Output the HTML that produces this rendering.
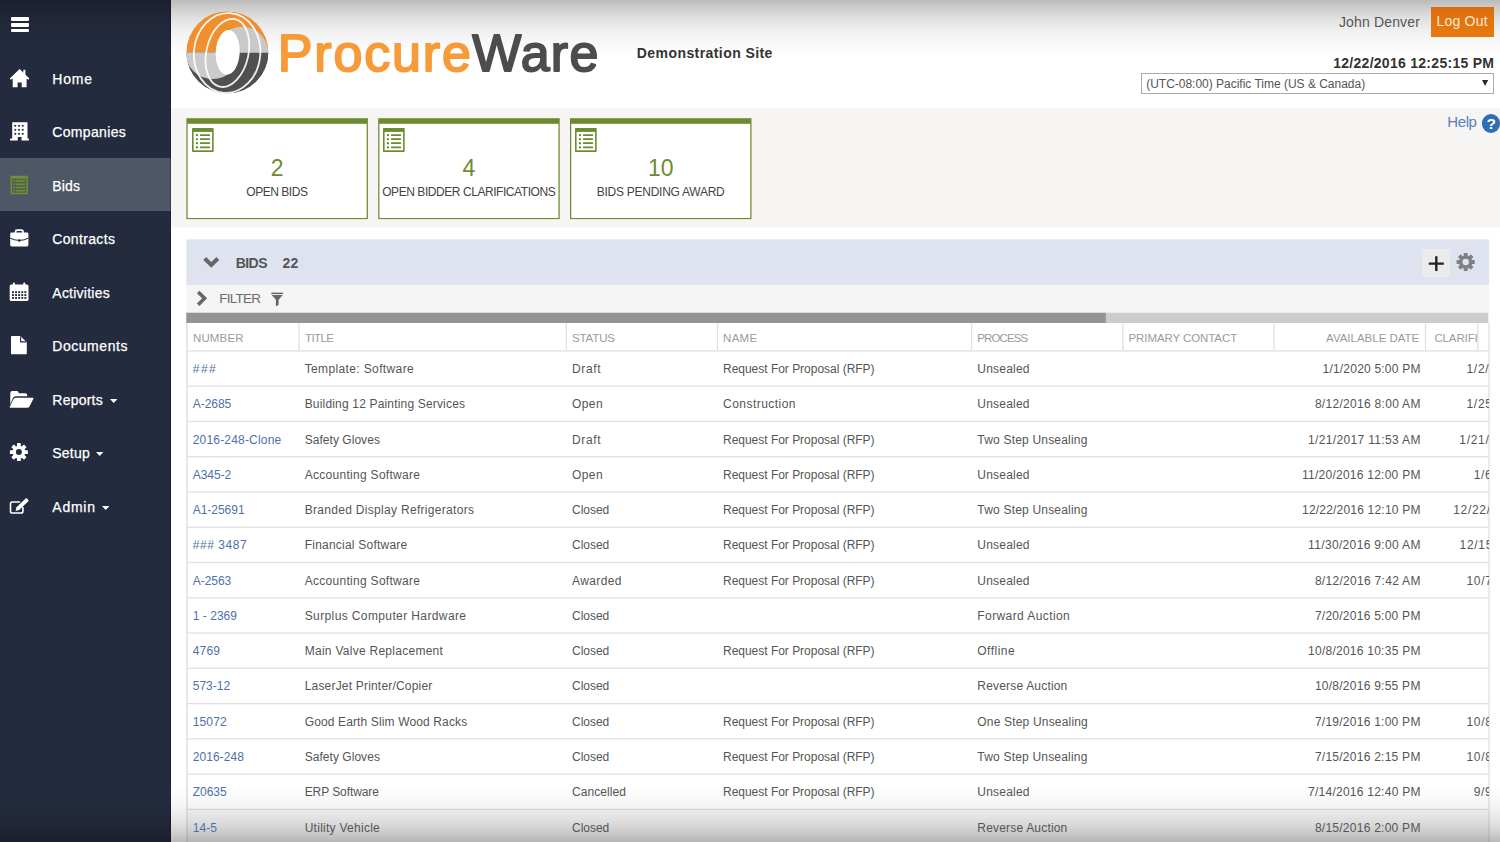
<!DOCTYPE html>
<html><head><meta charset="utf-8"><title>ProcureWare</title>
<style>
*{box-sizing:border-box;margin:0;padding:0}
html,body{width:1500px;height:842px;overflow:hidden;background:#fff;font-family:"Liberation Sans",sans-serif;}
#root{position:relative;width:1500px;height:842px;overflow:hidden;background:#fff}
.abs{position:absolute}
#side{position:absolute;left:0;top:0;width:171px;height:842px;background:#242b3e}
#shT{position:absolute;left:0;top:0;width:1500px;height:60px;pointer-events:none;background:linear-gradient(to bottom,rgba(0,0,0,.268) 0,rgba(0,0,0,.18) 10px,rgba(0,0,0,.11) 20px,rgba(0,0,0,.063) 30px,rgba(0,0,0,.03) 40px,rgba(0,0,0,.012) 50px,rgba(0,0,0,0) 60px)}
#shB{position:absolute;left:0;top:782px;width:1500px;height:60px;pointer-events:none;background:linear-gradient(to top,rgba(0,0,0,.268) 0,rgba(0,0,0,.18) 10px,rgba(0,0,0,.11) 20px,rgba(0,0,0,.063) 30px,rgba(0,0,0,.03) 40px,rgba(0,0,0,.012) 50px,rgba(0,0,0,0) 60px)}
svg{position:absolute;overflow:visible}
</style></head><body><div id="root">

<svg style="left:0;top:0" width="1500" height="842" viewBox="0 0 1500 842"><rect x="171" y="108.3" width="1329" height="119.2" fill="#f6f5f3"/></svg>
<div id="side"></div>
<div class="abs" style="left:0;top:158px;width:171px;height:53px;background:#4d5765"></div>
<div id="shT"></div>
<div class="abs" style="left:10.5px;top:17.3px;width:18px;height:3.6px;background:#fff;border-radius:1px"></div>
<div class="abs" style="left:10.5px;top:23px;width:18px;height:3.6px;background:#fff;border-radius:1px"></div>
<div class="abs" style="left:10.5px;top:28.7px;width:18px;height:3.6px;background:#fff;border-radius:1px"></div>
<div style="position:absolute;top:68.90px;line-height:20px;font-size:14px;color:#fff;white-space:pre;letter-spacing:0.814px;left:52.30px;-webkit-text-stroke:0.25px #fff;">Home</div>
<div style="position:absolute;top:122.40px;line-height:20px;font-size:14px;color:#fff;white-space:pre;letter-spacing:0.334px;left:52.30px;-webkit-text-stroke:0.25px #fff;">Companies</div>
<div style="position:absolute;top:175.70px;line-height:20px;font-size:14px;color:#fff;white-space:pre;letter-spacing:0.122px;left:52.30px;-webkit-text-stroke:0.25px #fff;">Bids</div>
<div style="position:absolute;top:229.30px;line-height:20px;font-size:14px;color:#fff;white-space:pre;letter-spacing:0.335px;left:52.30px;-webkit-text-stroke:0.25px #fff;">Contracts</div>
<div style="position:absolute;top:282.90px;line-height:20px;font-size:14px;color:#fff;white-space:pre;letter-spacing:0.241px;left:52.30px;-webkit-text-stroke:0.25px #fff;">Activities</div>
<div style="position:absolute;top:335.90px;line-height:20px;font-size:14px;color:#fff;white-space:pre;letter-spacing:0.536px;left:52.30px;-webkit-text-stroke:0.25px #fff;">Documents</div>
<div style="position:absolute;top:389.90px;line-height:20px;font-size:14px;color:#fff;white-space:pre;letter-spacing:0.228px;left:52.30px;-webkit-text-stroke:0.25px #fff;">Reports</div>
<div style="position:absolute;top:443.40px;line-height:20px;font-size:14px;color:#fff;white-space:pre;letter-spacing:0.227px;left:52.30px;-webkit-text-stroke:0.25px #fff;">Setup</div>
<div style="position:absolute;top:496.90px;line-height:20px;font-size:14px;color:#fff;white-space:pre;letter-spacing:0.753px;left:52.30px;-webkit-text-stroke:0.25px #fff;">Admin</div>
<svg style="left:109.7px;top:398.5px" width="7.4" height="4"><path d="M0 0H7.4L3.7 4Z" fill="#fff"/></svg>
<svg style="left:96.2px;top:452px" width="7.4" height="4"><path d="M0 0H7.4L3.7 4Z" fill="#fff"/></svg>
<svg style="left:101.7px;top:505.5px" width="7.4" height="4"><path d="M0 0H7.4L3.7 4Z" fill="#fff"/></svg>
<svg style="left:0;top:0" width="171" height="842" viewBox="0 0 171 842">
<!-- home -->
<g fill="#fff">
<path d="M19.6 68.9L29.4 78.5L28.4 79.7L26.6 78.4V87.2H21.7V82.4H17.6V87.2H12.7V78.4L10.8 79.7L9.8 78.5Z"/>
<rect x="23.3" y="69.8" width="2.1" height="5"/>
</g>
<!-- building -->
<g fill="#fff">
<path d="M12.2 122.2H27.5V138.6H28.9V140.5H21.5V137H17.8V140.5H10.1V138.6H12.2Z"/>
</g>
<g fill="#242b3e">
<rect x="14.4" y="124.9" width="1.8" height="1.8"/><rect x="18.1" y="124.9" width="1.8" height="1.8"/><rect x="21.8" y="124.9" width="1.8" height="1.8"/>
<rect x="14.4" y="128.9" width="1.8" height="1.8"/><rect x="18.1" y="128.9" width="1.8" height="1.8"/><rect x="21.8" y="128.9" width="1.8" height="1.8"/>
<rect x="14.4" y="132.9" width="1.8" height="1.8"/><rect x="18.1" y="132.9" width="1.8" height="1.8"/><rect x="21.8" y="132.9" width="1.8" height="1.8"/>
<rect x="23.9" y="124.9" width="1.4" height="1.8" opacity="0"/>
</g>
<!-- bids (green list) -->
<g>
<rect x="10.5" y="175.7" width="17.4" height="18.5" fill="#6f9037"/>
<rect x="12" y="178.6" width="14.4" height="14.2" fill="#55614f"/>
<g fill="#6f9037">
<rect x="13.3" y="180.3" width="1.6" height="1.5"/><rect x="15.9" y="180.3" width="9.2" height="1.5"/>
<rect x="13.3" y="183.5" width="1.6" height="1.5"/><rect x="15.9" y="183.5" width="9.2" height="1.5"/>
<rect x="13.3" y="186.7" width="1.6" height="1.5"/><rect x="15.9" y="186.7" width="9.2" height="1.5"/>
<rect x="13.3" y="189.9" width="1.6" height="1.5"/><rect x="15.9" y="189.9" width="9.2" height="1.5"/>
</g>
</g>
<!-- briefcase -->
<g>
<path d="M15.6 233V231.8Q15.6 230.2 17.4 230.2H21.2Q23 230.2 23 231.8V233" fill="none" stroke="#fff" stroke-width="1.7"/>
<path d="M11.6 232.6H27Q28.4 232.6 28.4 234V245Q28.4 246.4 27 246.4H11.6Q10.2 246.4 10.2 245V234Q10.2 232.6 11.6 232.6Z" fill="#fff"/>
<path d="M10.2 238.2Q14.6 240.4 19.3 240.4Q24 240.4 28.4 238.2" fill="none" stroke="#242b3e" stroke-width="1"/>
<circle cx="19.3" cy="240.5" r="1.3" fill="#242b3e"/>
</g>
<!-- calendar -->
<g>
<path d="M11.2 284.6H27Q28.5 284.6 28.5 286.1V299.6Q28.5 301.1 27 301.1H11.2Q9.7 301.1 9.7 299.6V286.1Q9.7 284.6 11.2 284.6Z" fill="#fff"/>
<rect x="12.9" y="282.5" width="2" height="4" rx="1" fill="#fff"/><rect x="23.3" y="282.5" width="2" height="4" rx="1" fill="#fff"/>
<g fill="#242b3e">
<rect x="12" y="291.2" width="1.9" height="1.9"/><rect x="15.1" y="291.2" width="1.9" height="1.9"/><rect x="18.2" y="291.2" width="1.9" height="1.9"/><rect x="21.3" y="291.2" width="1.9" height="1.9"/><rect x="24.4" y="291.2" width="1.9" height="1.9"/>
<rect x="12" y="294.1" width="1.9" height="1.9"/><rect x="15.1" y="294.1" width="1.9" height="1.9"/><rect x="18.2" y="294.1" width="1.9" height="1.9"/><rect x="21.3" y="294.1" width="1.9" height="1.9"/><rect x="24.4" y="294.1" width="1.9" height="1.9"/>
<rect x="12" y="297" width="1.9" height="1.9"/><rect x="15.1" y="297" width="1.9" height="1.9"/><rect x="18.2" y="297" width="1.9" height="1.9"/><rect x="21.3" y="297" width="1.9" height="1.9"/><rect x="24.4" y="297" width="1.9" height="1.9"/>
</g>
</g>
<!-- file -->
<g>
<path d="M11.8 336.1H20.3L26.8 342.2V353.5Q26.8 354.3 26 354.3H11.8Q11 354.3 11 353.5V336.9Q11 336.1 11.8 336.1Z" fill="#fff"/>
<path d="M20.6 336.6V341.9H26.4" fill="none" stroke="#242b3e" stroke-width="1.1"/>
</g>
<!-- folder open -->
<g fill="#fff">
<path d="M10.3 404.5V393Q10.3 391 12.3 391H16.8Q18.6 391 18.6 392.8V393.3H25.2Q27.2 393.3 27.2 395.3V396.3H15.8Q13.8 396.3 12.9 398.1Z"/>
<path d="M15.4 397.7H32.6Q34 397.7 33.3 399L29.6 406.3Q28.8 407.8 27.1 407.8H10.6Q9.2 407.8 9.9 406.5L13.4 399.2Q14.1 397.7 15.4 397.7Z"/>
</g>
<!-- cog -->
<g transform="translate(18.9 452.1)">
<g fill="#fff">
<circle r="6.4"/>
<rect x="-1.9" y="-9" width="3.8" height="18" rx="0.6"/>
<rect x="-1.9" y="-9" width="3.8" height="18" rx="0.6" transform="rotate(45)"/>
<rect x="-1.9" y="-9" width="3.8" height="18" rx="0.6" transform="rotate(90)"/>
<rect x="-1.9" y="-9" width="3.8" height="18" rx="0.6" transform="rotate(135)"/>
</g>
<circle r="3" fill="#242b3e"/>
</g>
<!-- edit -->
<g>
<path d="M22.9 507.6V511.2Q22.9 513 21.1 513H12.3Q10.5 513 10.5 511.2V503.8Q10.5 502 12.3 502H19.5" fill="none" stroke="#fff" stroke-width="1.6" stroke-linecap="round"/>
<path d="M15.6 510.9L16.5 507.3L25.6 498.6Q26.3 498 27 498.6L28.3 499.9Q28.9 500.6 28.3 501.3L19.2 510Z" fill="#fff"/>
</g>
</svg>

<svg style="left:171px;top:0" width="460" height="108" viewBox="171 0 460 108">
<defs>
<clipPath id="cTop"><rect x="180" y="5" width="95" height="47.6"/></clipPath>
<clipPath id="cBot"><rect x="180" y="52.6" width="95" height="48"/></clipPath>
<clipPath id="cOut"><circle cx="227.4" cy="52.4" r="41.2"/></clipPath>
<clipPath id="cTR"><rect x="228" y="5" width="50" height="47.6"/></clipPath>
<clipPath id="cBL"><rect x="180" y="52.6" width="47" height="48"/></clipPath>
</defs>
<g clip-path="url(#cOut)">
<g clip-path="url(#cTop)"><circle cx="227.4" cy="52.4" r="41.2" fill="#ef9030"/></g>
<g clip-path="url(#cBot)"><circle cx="227.4" cy="52.4" r="41.2" fill="#505050"/></g>
<g clip-path="url(#cTR)"><circle cx="242" cy="53" r="26.3" fill="#c9c9c9"/></g>
<g clip-path="url(#cBL)"><circle cx="212.7" cy="51.5" r="27.5" fill="#cbcbcb"/></g>
<g fill="none" stroke="#fff" stroke-width="1.8" stroke-opacity="0.9">
<ellipse cx="227.4" cy="52.9" rx="21" ry="34.6" transform="rotate(13 227.4 52.9)"/>
<ellipse cx="227.1" cy="53" rx="33.2" ry="40" transform="rotate(5 227.1 53)"/>
</g>
<ellipse cx="227.7" cy="52.4" rx="12" ry="22.4" fill="#fff" transform="rotate(3 227.7 52.4)"/>
</g>
<text x="277.8" y="71" font-family="Liberation Sans, sans-serif" font-size="52" font-weight="400" fill="#f79a38" stroke="#f79a38" stroke-width="1.9" stroke-linejoin="round" textLength="193" lengthAdjust="spacing">Procure</text>
<text x="472.3" y="71" font-family="Liberation Sans, sans-serif" font-size="52" font-weight="400" fill="#4d4d4d" stroke="#4d4d4d" stroke-width="1.9" stroke-linejoin="round" textLength="126" lengthAdjust="spacing">Ware</text>
</svg>

<div style="position:absolute;top:42.50px;line-height:20px;font-size:14px;color:#333;white-space:pre;font-weight:700;letter-spacing:0.426px;left:636.80px;">Demonstration Site</div>
<div style="position:absolute;top:12.20px;line-height:20px;font-size:14px;color:#555;white-space:pre;letter-spacing:0.161px;left:1338.90px;">John Denver</div>
<div class="abs" style="left:1431px;top:7px;width:63px;height:30px;background:linear-gradient(#d96c0e,#e3750f 50%,#e6780f)"></div>
<div style="position:absolute;top:11.20px;line-height:20px;font-size:14px;color:#f8e8d6;white-space:pre;letter-spacing:0.245px;left:1436.40px;">Log Out</div>
<div style="position:absolute;top:52.70px;line-height:20px;font-size:14px;color:#333;white-space:pre;font-weight:700;letter-spacing:0.281px;left:1333.20px;">12/22/2016 12:25:15 PM</div>
<div class="abs" style="left:1141px;top:73px;width:353px;height:21px;background:#fff;border:1px solid #ababab"></div>
<div style="position:absolute;top:73.50px;line-height:20px;font-size:12px;color:#555;white-space:pre;letter-spacing:-0.011px;left:1146.20px;">(UTC-08:00) Pacific Time (US &amp; Canada)</div>
<svg style="left:1481.7px;top:79.8px" width="6.2" height="6.1"><path d="M0 0H6.2L3.1 6.1Z" fill="#2a2a2a"/></svg>
<div style="position:absolute;top:111.80px;line-height:20px;font-size:15px;color:#5580ba;white-space:pre;letter-spacing:-0.42px;left:1447.30px;">Help</div>
<div class="abs" style="left:1481.5px;top:114px;width:18.6px;height:18.6px;border-radius:50%;background:#2f6db5"></div>
<div style="position:absolute;top:113.70px;line-height:20px;font-size:15.5px;color:#fff;white-space:pre;font-weight:700;left:1486.40px;">?</div>
<svg style="left:0;top:0" width="1500" height="842" viewBox="0 0 1500 842"><rect x="186.4" y="118.2" width="181.5" height="100.9" fill="#6b8b30"/><rect x="187.65" y="123.8" width="179" height="94.2" fill="#fff"/><rect x="378.2" y="118.2" width="181.5" height="100.9" fill="#6b8b30"/><rect x="379.45" y="123.8" width="179" height="94.2" fill="#fff"/><rect x="570" y="118.2" width="181.5" height="100.9" fill="#6b8b30"/><rect x="571.25" y="123.8" width="179" height="94.2" fill="#fff"/></svg>
<div style="position:absolute;top:157.50px;line-height:20px;font-size:23px;color:#6c8c32;white-space:pre;left:270.75px;">2</div>
<div style="position:absolute;top:181.60px;line-height:20px;font-size:12px;color:#444;white-space:pre;letter-spacing:-0.47px;left:246.35px;">OPEN BIDS</div>
<div style="position:absolute;top:157.50px;line-height:20px;font-size:23px;color:#6c8c32;white-space:pre;left:462.55px;">4</div>
<div style="position:absolute;top:181.60px;line-height:20px;font-size:12px;color:#444;white-space:pre;letter-spacing:-0.439px;left:382.20px;">OPEN BIDDER CLARIFICATIONS</div>
<div style="position:absolute;top:157.50px;line-height:20px;font-size:23px;color:#6c8c32;white-space:pre;left:647.95px;">10</div>
<div style="position:absolute;top:181.60px;line-height:20px;font-size:12px;color:#444;white-space:pre;letter-spacing:-0.257px;left:596.70px;">BIDS PENDING AWARD</div>
<svg style="left:191.5px;top:128.3px" width="21.7" height="24" viewBox="0 0 21.7 24"><rect x="0" y="0" width="21.7" height="24" rx="0.8" fill="#6b8b30"/><rect x="1.6" y="3.9" width="18.5" height="18.4" fill="#fff"/><rect x="3.9" y="6.1" width="2.1" height="2" fill="#6b8b30"/><rect x="7.9" y="6.2" width="10.2" height="1.8" rx="0.5" fill="#6b8b30"/><rect x="3.9" y="10.2" width="2.1" height="2" fill="#6b8b30"/><rect x="7.9" y="10.3" width="10.2" height="1.8" rx="0.5" fill="#6b8b30"/><rect x="3.9" y="14.2" width="2.1" height="2" fill="#6b8b30"/><rect x="7.9" y="14.3" width="10.2" height="1.8" rx="0.5" fill="#6b8b30"/><rect x="3.9" y="18.3" width="2.1" height="2" fill="#6b8b30"/><rect x="7.9" y="18.4" width="10.2" height="1.8" rx="0.5" fill="#6b8b30"/></svg>
<svg style="left:383.3px;top:128.3px" width="21.7" height="24" viewBox="0 0 21.7 24"><rect x="0" y="0" width="21.7" height="24" rx="0.8" fill="#6b8b30"/><rect x="1.6" y="3.9" width="18.5" height="18.4" fill="#fff"/><rect x="3.9" y="6.1" width="2.1" height="2" fill="#6b8b30"/><rect x="7.9" y="6.2" width="10.2" height="1.8" rx="0.5" fill="#6b8b30"/><rect x="3.9" y="10.2" width="2.1" height="2" fill="#6b8b30"/><rect x="7.9" y="10.3" width="10.2" height="1.8" rx="0.5" fill="#6b8b30"/><rect x="3.9" y="14.2" width="2.1" height="2" fill="#6b8b30"/><rect x="7.9" y="14.3" width="10.2" height="1.8" rx="0.5" fill="#6b8b30"/><rect x="3.9" y="18.3" width="2.1" height="2" fill="#6b8b30"/><rect x="7.9" y="18.4" width="10.2" height="1.8" rx="0.5" fill="#6b8b30"/></svg>
<svg style="left:575.1px;top:128.3px" width="21.7" height="24" viewBox="0 0 21.7 24"><rect x="0" y="0" width="21.7" height="24" rx="0.8" fill="#6b8b30"/><rect x="1.6" y="3.9" width="18.5" height="18.4" fill="#fff"/><rect x="3.9" y="6.1" width="2.1" height="2" fill="#6b8b30"/><rect x="7.9" y="6.2" width="10.2" height="1.8" rx="0.5" fill="#6b8b30"/><rect x="3.9" y="10.2" width="2.1" height="2" fill="#6b8b30"/><rect x="7.9" y="10.3" width="10.2" height="1.8" rx="0.5" fill="#6b8b30"/><rect x="3.9" y="14.2" width="2.1" height="2" fill="#6b8b30"/><rect x="7.9" y="14.3" width="10.2" height="1.8" rx="0.5" fill="#6b8b30"/><rect x="3.9" y="18.3" width="2.1" height="2" fill="#6b8b30"/><rect x="7.9" y="18.4" width="10.2" height="1.8" rx="0.5" fill="#6b8b30"/></svg>
<svg style="left:0;top:0" width="1500" height="842" viewBox="0 0 1500 842"><rect x="186.4" y="239.4" width="1302.8" height="46" fill="#dfe3ef"/><rect x="186.4" y="285.3" width="1302.8" height="28" fill="#f5f5f5"/><path d="M186.4 312.8H1486.6Q1488.4 312.8 1488.4 314.6V323H186.4Z" fill="#ccc"/><rect x="186.4" y="312.8" width="919.4" height="10.2" fill="#949494"/></svg>
<div style="position:absolute;top:252.60px;line-height:20px;font-size:14px;color:#555;white-space:pre;font-weight:700;letter-spacing:-0.551px;left:235.70px;">BIDS</div>
<div style="position:absolute;top:252.60px;line-height:20px;font-size:14px;color:#555;white-space:pre;font-weight:700;letter-spacing:0.222px;left:282.40px;">22</div>
<div style="position:absolute;top:289.00px;line-height:20px;font-size:13.5px;color:#6a6a6a;white-space:pre;letter-spacing:-0.783px;left:219.30px;">FILTER</div>
<div class="abs" style="left:1422px;top:249px;width:27.9px;height:27.9px;background:#ebebeb"></div>
<svg style="left:186.5px;top:239.5px" width="1302" height="75" viewBox="186.5 239.5 1302 75">
<path d="M204.2 258L210.75 264.5L217.3 258" fill="none" stroke="#666" stroke-width="4" stroke-linecap="butt" stroke-linejoin="miter"/>
<path d="M197.7 291.4L204.1 297.8L197.7 304.2" fill="none" stroke="#666" stroke-width="3.6" stroke-linecap="butt" stroke-linejoin="miter"/>
<rect x="270.8" y="292.1" width="11.8" height="1.5" fill="#666"/>
<path d="M271.2 294.5H282.2L278.1 299.3V304.5L275.4 305.8V299.3Z" fill="#666"/>
<path d="M1435.8 255.7V270.6M1428.3 263.15H1443.3" stroke="#222" stroke-width="2.4" fill="none"/>
<g transform="translate(1465.2 261.5)"><g fill="#808080"><circle r="6.6"/>
<rect x="-2" y="-9.1" width="4" height="18.2" rx="0.7" transform="rotate(0)"/>
<rect x="-2" y="-9.1" width="4" height="18.2" rx="0.7" transform="rotate(45)"/>
<rect x="-2" y="-9.1" width="4" height="18.2" rx="0.7" transform="rotate(90)"/>
<rect x="-2" y="-9.1" width="4" height="18.2" rx="0.7" transform="rotate(135)"/>
</g><circle r="3.2" fill="#dfe3ef"/></g>
</svg>
<div class="abs" style="left:187.5px;top:809.41px;width:1300px;height:40px;background:#f8f8f8"></div>
<svg style="left:0;top:0" width="1500" height="842" viewBox="0 0 1500 842"><rect x="187" y="350.25" width="1301.5" height="1.3" fill="#e0e0e0"/><rect x="187" y="385.52" width="1301.5" height="1.3" fill="#e0e0e0"/><rect x="187" y="420.79" width="1301.5" height="1.3" fill="#e0e0e0"/><rect x="187" y="456.06" width="1301.5" height="1.3" fill="#e0e0e0"/><rect x="187" y="491.33" width="1301.5" height="1.3" fill="#e0e0e0"/><rect x="187" y="526.60" width="1301.5" height="1.3" fill="#e0e0e0"/><rect x="187" y="561.87" width="1301.5" height="1.3" fill="#e0e0e0"/><rect x="187" y="597.14" width="1301.5" height="1.3" fill="#e0e0e0"/><rect x="187" y="632.41" width="1301.5" height="1.3" fill="#e0e0e0"/><rect x="187" y="667.68" width="1301.5" height="1.3" fill="#e0e0e0"/><rect x="187" y="702.95" width="1301.5" height="1.3" fill="#e0e0e0"/><rect x="187" y="738.22" width="1301.5" height="1.3" fill="#e0e0e0"/><rect x="187" y="773.49" width="1301.5" height="1.3" fill="#e0e0e0"/><rect x="187" y="808.76" width="1301.5" height="1.3" fill="#e0e0e0"/><rect x="298.30" y="323.3" width="1.3" height="27.3" fill="#e0e0e0"/><rect x="565.65" y="323.3" width="1.3" height="27.3" fill="#e0e0e0"/><rect x="716.85" y="323.3" width="1.3" height="27.3" fill="#e0e0e0"/><rect x="970.95" y="323.3" width="1.3" height="27.3" fill="#e0e0e0"/><rect x="1122.15" y="323.3" width="1.3" height="27.3" fill="#e0e0e0"/><rect x="1273.35" y="323.3" width="1.3" height="27.3" fill="#e0e0e0"/><rect x="1424.85" y="323.3" width="1.3" height="27.3" fill="#e0e0e0"/><rect x="1477.15" y="323.3" width="1.3" height="27.3" fill="#e0e0e0"/><rect x="186.1" y="323" width="1.7" height="519" fill="#e4e4e4"/><rect x="1488.2" y="323" width="1.7" height="519" fill="#e6e6e6"/><rect x="170" y="0" width="1" height="842" fill="#000" fill-opacity="0.22"/></svg>
<div id="shB"></div>
<div style="position:absolute;top:327.70px;line-height:20px;font-size:11.5px;color:#9b9b9b;white-space:pre;letter-spacing:0.131px;left:193.00px;">NUMBER</div>
<div style="position:absolute;top:327.70px;line-height:20px;font-size:11.5px;color:#9b9b9b;white-space:pre;letter-spacing:-0.578px;left:305.00px;">TITLE</div>
<div style="position:absolute;top:327.70px;line-height:20px;font-size:11.5px;color:#9b9b9b;white-space:pre;letter-spacing:-0.134px;left:572.00px;">STATUS</div>
<div style="position:absolute;top:327.70px;line-height:20px;font-size:11.5px;color:#9b9b9b;white-space:pre;letter-spacing:0.322px;left:723.00px;">NAME</div>
<div style="position:absolute;top:327.70px;line-height:20px;font-size:11.5px;color:#9b9b9b;white-space:pre;letter-spacing:-0.875px;left:977.30px;">PROCESS</div>
<div style="position:absolute;top:327.70px;line-height:20px;font-size:11.5px;color:#9b9b9b;white-space:pre;letter-spacing:-0.086px;left:1128.50px;">PRIMARY CONTACT</div>
<div style="position:absolute;top:327.70px;line-height:20px;font-size:11.5px;color:#9b9b9b;white-space:pre;letter-spacing:-0.01px;left:1326.10px;">AVAILABLE DATE</div>
<div class="abs" style="left:1426px;top:324px;width:51px;height:26px;overflow:hidden"><div style="position:absolute;top:3.70px;line-height:20px;font-size:11.5px;color:#9b9b9b;white-space:pre;letter-spacing:-0.125px;left:8.40px;">CLARIFICATION</div></div>
<div class="abs" style="left:0;top:0;width:1488.5px;height:842px;overflow:hidden">
<div style="position:absolute;top:359.03px;line-height:20px;font-size:12px;color:#4d72a8;white-space:pre;letter-spacing:1.534px;left:192.70px;">###</div>
<div style="position:absolute;top:359.03px;line-height:20px;font-size:12px;color:#555;white-space:pre;letter-spacing:0.369px;left:304.70px;">Template: Software</div>
<div style="position:absolute;top:359.03px;line-height:20px;font-size:12px;color:#555;white-space:pre;letter-spacing:0.646px;left:572.00px;">Draft</div>
<div style="position:absolute;top:359.03px;line-height:20px;font-size:12px;color:#555;white-space:pre;letter-spacing:-0.019px;left:723.00px;">Request For Proposal (RFP)</div>
<div style="position:absolute;top:359.03px;line-height:20px;font-size:12px;color:#555;white-space:pre;letter-spacing:0.214px;left:977.30px;">Unsealed</div>
<div style="position:absolute;top:359.03px;line-height:20px;font-size:12px;color:#555;white-space:pre;letter-spacing:0.211px;left:1322.50px;">1/1/2020 5:00 PM</div>
<div style="position:absolute;top:359.03px;line-height:20px;font-size:12px;color:#555;white-space:pre;letter-spacing:0.695px;left:1466.50px;">1/2/2020 5:00 PM</div>
<div style="position:absolute;top:394.30px;line-height:20px;font-size:12px;color:#4d72a8;white-space:pre;letter-spacing:-0.021px;left:192.70px;">A-2685</div>
<div style="position:absolute;top:394.30px;line-height:20px;font-size:12px;color:#555;white-space:pre;letter-spacing:0.174px;left:304.70px;">Building 12 Painting Services</div>
<div style="position:absolute;top:394.30px;line-height:20px;font-size:12px;color:#555;white-space:pre;letter-spacing:0.414px;left:572.00px;">Open</div>
<div style="position:absolute;top:394.30px;line-height:20px;font-size:12px;color:#555;white-space:pre;letter-spacing:0.466px;left:723.00px;">Construction</div>
<div style="position:absolute;top:394.30px;line-height:20px;font-size:12px;color:#555;white-space:pre;letter-spacing:0.214px;left:977.30px;">Unsealed</div>
<div style="position:absolute;top:394.30px;line-height:20px;font-size:12px;color:#555;white-space:pre;letter-spacing:0.297px;left:1314.90px;">8/12/2016 8:00 AM</div>
<div style="position:absolute;top:394.30px;line-height:20px;font-size:12px;color:#555;white-space:pre;letter-spacing:0.693px;left:1466.50px;">1/25/2017 8:00 AM</div>
<div style="position:absolute;top:429.57px;line-height:20px;font-size:12px;color:#4d72a8;white-space:pre;letter-spacing:0.188px;left:192.70px;">2016-248-Clone</div>
<div style="position:absolute;top:429.57px;line-height:20px;font-size:12px;color:#555;white-space:pre;letter-spacing:0.041px;left:304.70px;">Safety Gloves</div>
<div style="position:absolute;top:429.57px;line-height:20px;font-size:12px;color:#555;white-space:pre;letter-spacing:0.646px;left:572.00px;">Draft</div>
<div style="position:absolute;top:429.57px;line-height:20px;font-size:12px;color:#555;white-space:pre;letter-spacing:-0.019px;left:723.00px;">Request For Proposal (RFP)</div>
<div style="position:absolute;top:429.57px;line-height:20px;font-size:12px;color:#555;white-space:pre;letter-spacing:0.198px;left:977.30px;">Two Step Unsealing</div>
<div style="position:absolute;top:429.57px;line-height:20px;font-size:12px;color:#555;white-space:pre;letter-spacing:0.339px;left:1308.10px;">1/21/2017 11:53 AM</div>
<div style="position:absolute;top:429.57px;line-height:20px;font-size:12px;color:#555;white-space:pre;letter-spacing:0.689px;left:1459.30px;">1/21/2017 11:53 AM</div>
<div style="position:absolute;top:464.84px;line-height:20px;font-size:12px;color:#4d72a8;white-space:pre;letter-spacing:-0.021px;left:192.70px;">A345-2</div>
<div style="position:absolute;top:464.84px;line-height:20px;font-size:12px;color:#555;white-space:pre;letter-spacing:0.291px;left:304.70px;">Accounting Software</div>
<div style="position:absolute;top:464.84px;line-height:20px;font-size:12px;color:#555;white-space:pre;letter-spacing:0.414px;left:572.00px;">Open</div>
<div style="position:absolute;top:464.84px;line-height:20px;font-size:12px;color:#555;white-space:pre;letter-spacing:-0.019px;left:723.00px;">Request For Proposal (RFP)</div>
<div style="position:absolute;top:464.84px;line-height:20px;font-size:12px;color:#555;white-space:pre;letter-spacing:0.214px;left:977.30px;">Unsealed</div>
<div style="position:absolute;top:464.84px;line-height:20px;font-size:12px;color:#555;white-space:pre;letter-spacing:0.251px;left:1302.00px;">11/20/2016 12:00 PM</div>
<div style="position:absolute;top:464.84px;line-height:20px;font-size:12px;color:#555;white-space:pre;letter-spacing:0.697px;left:1473.70px;">1/6/2017 12:00 PM</div>
<div style="position:absolute;top:500.12px;line-height:20px;font-size:12px;color:#4d72a8;white-space:pre;letter-spacing:-0.021px;left:192.70px;">A1-25691</div>
<div style="position:absolute;top:500.12px;line-height:20px;font-size:12px;color:#555;white-space:pre;letter-spacing:0.305px;left:304.70px;">Branded Display Refrigerators</div>
<div style="position:absolute;top:500.12px;line-height:20px;font-size:12px;color:#555;white-space:pre;letter-spacing:-0.032px;left:572.00px;">Closed</div>
<div style="position:absolute;top:500.12px;line-height:20px;font-size:12px;color:#555;white-space:pre;letter-spacing:-0.019px;left:723.00px;">Request For Proposal (RFP)</div>
<div style="position:absolute;top:500.12px;line-height:20px;font-size:12px;color:#555;white-space:pre;letter-spacing:0.198px;left:977.30px;">Two Step Unsealing</div>
<div style="position:absolute;top:500.12px;line-height:20px;font-size:12px;color:#555;white-space:pre;letter-spacing:0.202px;left:1302.00px;">12/22/2016 12:10 PM</div>
<div style="position:absolute;top:500.12px;line-height:20px;font-size:12px;color:#555;white-space:pre;letter-spacing:0.701px;left:1453.20px;">12/22/2016 12:10 PM</div>
<div style="position:absolute;top:535.38px;line-height:20px;font-size:12px;color:#4d72a8;white-space:pre;letter-spacing:0.562px;left:192.70px;">### 3487</div>
<div style="position:absolute;top:535.38px;line-height:20px;font-size:12px;color:#555;white-space:pre;letter-spacing:0.222px;left:304.70px;">Financial Software</div>
<div style="position:absolute;top:535.38px;line-height:20px;font-size:12px;color:#555;white-space:pre;letter-spacing:-0.032px;left:572.00px;">Closed</div>
<div style="position:absolute;top:535.38px;line-height:20px;font-size:12px;color:#555;white-space:pre;letter-spacing:-0.019px;left:723.00px;">Request For Proposal (RFP)</div>
<div style="position:absolute;top:535.38px;line-height:20px;font-size:12px;color:#555;white-space:pre;letter-spacing:0.214px;left:977.30px;">Unsealed</div>
<div style="position:absolute;top:535.38px;line-height:20px;font-size:12px;color:#555;white-space:pre;letter-spacing:0.339px;left:1308.10px;">11/30/2016 9:00 AM</div>
<div style="position:absolute;top:535.38px;line-height:20px;font-size:12px;color:#555;white-space:pre;letter-spacing:0.695px;left:1459.60px;">12/15/2016 9:00 AM</div>
<div style="position:absolute;top:570.65px;line-height:20px;font-size:12px;color:#4d72a8;white-space:pre;letter-spacing:-0.021px;left:192.70px;">A-2563</div>
<div style="position:absolute;top:570.65px;line-height:20px;font-size:12px;color:#555;white-space:pre;letter-spacing:0.291px;left:304.70px;">Accounting Software</div>
<div style="position:absolute;top:570.65px;line-height:20px;font-size:12px;color:#555;white-space:pre;letter-spacing:0.391px;left:572.00px;">Awarded</div>
<div style="position:absolute;top:570.65px;line-height:20px;font-size:12px;color:#555;white-space:pre;letter-spacing:-0.019px;left:723.00px;">Request For Proposal (RFP)</div>
<div style="position:absolute;top:570.65px;line-height:20px;font-size:12px;color:#555;white-space:pre;letter-spacing:0.214px;left:977.30px;">Unsealed</div>
<div style="position:absolute;top:570.65px;line-height:20px;font-size:12px;color:#555;white-space:pre;letter-spacing:0.297px;left:1314.90px;">8/12/2016 7:42 AM</div>
<div style="position:absolute;top:570.65px;line-height:20px;font-size:12px;color:#555;white-space:pre;letter-spacing:0.693px;left:1466.50px;">10/7/2016 7:42 AM</div>
<div style="position:absolute;top:605.92px;line-height:20px;font-size:12px;color:#4d72a8;white-space:pre;letter-spacing:0.036px;left:192.70px;">1 - 2369</div>
<div style="position:absolute;top:605.92px;line-height:20px;font-size:12px;color:#555;white-space:pre;letter-spacing:0.385px;left:304.70px;">Surplus Computer Hardware</div>
<div style="position:absolute;top:605.92px;line-height:20px;font-size:12px;color:#555;white-space:pre;letter-spacing:-0.032px;left:572.00px;">Closed</div>
<div style="position:absolute;top:605.92px;line-height:20px;font-size:12px;color:#555;white-space:pre;letter-spacing:0.413px;left:977.30px;">Forward Auction</div>
<div style="position:absolute;top:605.92px;line-height:20px;font-size:12px;color:#555;white-space:pre;letter-spacing:0.255px;left:1314.90px;">7/20/2016 5:00 PM</div>
<div style="position:absolute;top:641.19px;line-height:20px;font-size:12px;color:#4d72a8;white-space:pre;letter-spacing:0.199px;left:192.70px;">4769</div>
<div style="position:absolute;top:641.19px;line-height:20px;font-size:12px;color:#555;white-space:pre;letter-spacing:0.271px;left:304.70px;">Main Valve Replacement</div>
<div style="position:absolute;top:641.19px;line-height:20px;font-size:12px;color:#555;white-space:pre;letter-spacing:-0.032px;left:572.00px;">Closed</div>
<div style="position:absolute;top:641.19px;line-height:20px;font-size:12px;color:#555;white-space:pre;letter-spacing:-0.019px;left:723.00px;">Request For Proposal (RFP)</div>
<div style="position:absolute;top:641.19px;line-height:20px;font-size:12px;color:#555;white-space:pre;letter-spacing:0.489px;left:977.30px;">Offline</div>
<div style="position:absolute;top:641.19px;line-height:20px;font-size:12px;color:#555;white-space:pre;letter-spacing:0.247px;left:1308.10px;">10/8/2016 10:35 PM</div>
<div style="position:absolute;top:676.46px;line-height:20px;font-size:12px;color:#4d72a8;white-space:pre;letter-spacing:0.025px;left:192.70px;">573-12</div>
<div style="position:absolute;top:676.46px;line-height:20px;font-size:12px;color:#555;white-space:pre;letter-spacing:0.191px;left:304.70px;">LaserJet Printer/Copier</div>
<div style="position:absolute;top:676.46px;line-height:20px;font-size:12px;color:#555;white-space:pre;letter-spacing:-0.032px;left:572.00px;">Closed</div>
<div style="position:absolute;top:676.46px;line-height:20px;font-size:12px;color:#555;white-space:pre;letter-spacing:0.186px;left:977.30px;">Reverse Auction</div>
<div style="position:absolute;top:676.46px;line-height:20px;font-size:12px;color:#555;white-space:pre;letter-spacing:0.255px;left:1314.90px;">10/8/2016 9:55 PM</div>
<div style="position:absolute;top:711.74px;line-height:20px;font-size:12px;color:#4d72a8;white-space:pre;letter-spacing:0.156px;left:192.70px;">15072</div>
<div style="position:absolute;top:711.74px;line-height:20px;font-size:12px;color:#555;white-space:pre;letter-spacing:0.133px;left:304.70px;">Good Earth Slim Wood Racks</div>
<div style="position:absolute;top:711.74px;line-height:20px;font-size:12px;color:#555;white-space:pre;letter-spacing:-0.032px;left:572.00px;">Closed</div>
<div style="position:absolute;top:711.74px;line-height:20px;font-size:12px;color:#555;white-space:pre;letter-spacing:-0.019px;left:723.00px;">Request For Proposal (RFP)</div>
<div style="position:absolute;top:711.74px;line-height:20px;font-size:12px;color:#555;white-space:pre;letter-spacing:0.182px;left:977.30px;">One Step Unsealing</div>
<div style="position:absolute;top:711.74px;line-height:20px;font-size:12px;color:#555;white-space:pre;letter-spacing:0.255px;left:1314.90px;">7/19/2016 1:00 PM</div>
<div style="position:absolute;top:711.74px;line-height:20px;font-size:12px;color:#555;white-space:pre;letter-spacing:0.697px;left:1466.50px;">10/8/2016 1:00 PM</div>
<div style="position:absolute;top:747.00px;line-height:20px;font-size:12px;color:#4d72a8;white-space:pre;letter-spacing:0.083px;left:192.70px;">2016-248</div>
<div style="position:absolute;top:747.00px;line-height:20px;font-size:12px;color:#555;white-space:pre;letter-spacing:0.041px;left:304.70px;">Safety Gloves</div>
<div style="position:absolute;top:747.00px;line-height:20px;font-size:12px;color:#555;white-space:pre;letter-spacing:-0.032px;left:572.00px;">Closed</div>
<div style="position:absolute;top:747.00px;line-height:20px;font-size:12px;color:#555;white-space:pre;letter-spacing:-0.019px;left:723.00px;">Request For Proposal (RFP)</div>
<div style="position:absolute;top:747.00px;line-height:20px;font-size:12px;color:#555;white-space:pre;letter-spacing:0.198px;left:977.30px;">Two Step Unsealing</div>
<div style="position:absolute;top:747.00px;line-height:20px;font-size:12px;color:#555;white-space:pre;letter-spacing:0.255px;left:1314.90px;">7/15/2016 2:15 PM</div>
<div style="position:absolute;top:747.00px;line-height:20px;font-size:12px;color:#555;white-space:pre;letter-spacing:0.697px;left:1466.50px;">10/8/2016 2:15 PM</div>
<div style="position:absolute;top:782.27px;line-height:20px;font-size:12px;color:#4d72a8;white-space:pre;letter-spacing:-0.008px;left:192.70px;">Z0635</div>
<div style="position:absolute;top:782.27px;line-height:20px;font-size:12px;color:#555;white-space:pre;letter-spacing:-0.087px;left:304.70px;">ERP Software</div>
<div style="position:absolute;top:782.27px;line-height:20px;font-size:12px;color:#555;white-space:pre;letter-spacing:0.078px;left:572.00px;">Cancelled</div>
<div style="position:absolute;top:782.27px;line-height:20px;font-size:12px;color:#555;white-space:pre;letter-spacing:-0.019px;left:723.00px;">Request For Proposal (RFP)</div>
<div style="position:absolute;top:782.27px;line-height:20px;font-size:12px;color:#555;white-space:pre;letter-spacing:0.214px;left:977.30px;">Unsealed</div>
<div style="position:absolute;top:782.27px;line-height:20px;font-size:12px;color:#555;white-space:pre;letter-spacing:0.247px;left:1308.10px;">7/14/2016 12:40 PM</div>
<div style="position:absolute;top:782.27px;line-height:20px;font-size:12px;color:#555;white-space:pre;letter-spacing:0.697px;left:1473.70px;">9/9/2016 12:40 PM</div>
<div style="position:absolute;top:817.55px;line-height:20px;font-size:12px;color:#4d72a8;white-space:pre;letter-spacing:0.09px;left:192.70px;">14-5</div>
<div style="position:absolute;top:817.55px;line-height:20px;font-size:12px;color:#555;white-space:pre;letter-spacing:0.266px;left:304.70px;">Utility Vehicle</div>
<div style="position:absolute;top:817.55px;line-height:20px;font-size:12px;color:#555;white-space:pre;letter-spacing:-0.032px;left:572.00px;">Closed</div>
<div style="position:absolute;top:817.55px;line-height:20px;font-size:12px;color:#555;white-space:pre;letter-spacing:0.186px;left:977.30px;">Reverse Auction</div>
<div style="position:absolute;top:817.55px;line-height:20px;font-size:12px;color:#555;white-space:pre;letter-spacing:0.255px;left:1314.90px;">8/15/2016 2:00 PM</div>
</div>
</div></body></html>
